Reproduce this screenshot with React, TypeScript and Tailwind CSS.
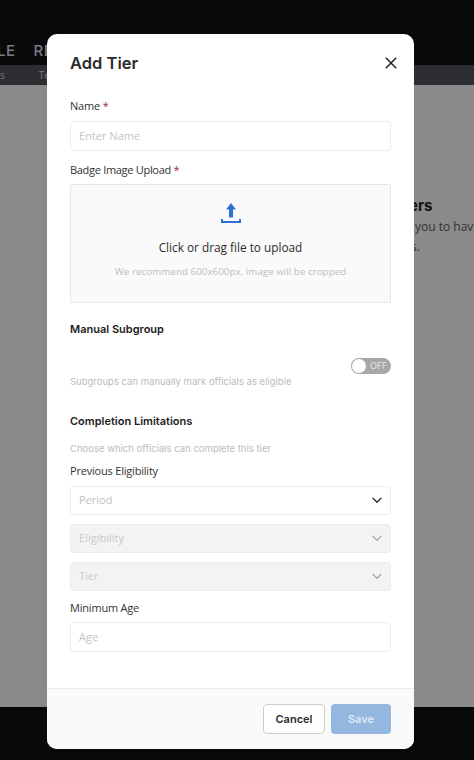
import React from "react";

const open = "font-['Open_Sans',sans-serif]";
const lato = "font-['Inter',sans-serif]";

function Chevron({ color }: { color: string }) {
  return (
    <svg width="10" height="7" viewBox="0 0 10 7" fill="none">
      <path d="M1 1.2 5 5.2l4-4" stroke={color} strokeWidth="1.3" strokeLinecap="round" strokeLinejoin="round" />
    </svg>
  );
}

function Select({ label, disabled, mt }: { label: string; disabled?: boolean; mt: string }) {
  return (
    <div
      className={`${mt} flex h-[29px] items-center justify-between rounded-[4px] border border-[#ebebeb] pl-2 pr-[8px] ${
        disabled ? "bg-[#f3f3f3]" : "bg-white"
      }`}
    >
      <span className={`${open} text-[11px] ${disabled ? "text-[#c9c9c9]" : "text-[#c4c4c4]"}`}>{label}</span>
      <Chevron color={disabled ? "#a9a9a9" : "#2b2b2b"} />
    </div>
  );
}

export default function App() {
  return (
    <div className="relative flex h-[760px] w-[474px] flex-col overflow-hidden bg-[#08090b]">
      <div className="flex h-[65px] items-end overflow-hidden pb-[3px]">
        <span className={`${lato} ml-[-3px] text-[15px] font-medium tracking-[0.5px] text-[#7b7c7e]`}>LE</span>
        <span className={`${lato} ml-[18px] text-[15px] font-medium tracking-[0.5px] text-[#7b7c7e]`}>RE</span>
      </div>
      <div className="flex h-[20px] items-center bg-[#2d2e31]">
        <span className={`${open} ml-[-7px] text-[10px] text-[#77787a]`}>fts</span>
        <span className={`${open} ml-[34px] text-[10px] text-[#77787a]`}>Te</span>
      </div>
      <div className="flex h-[622px] justify-end bg-[#8a8a8a]">
        <div className="w-[60px] pt-[111px]">
          <div className={`${lato} ml-[-5px] text-[15px] leading-[20px] font-bold text-[#111]`}>ers</div>
          <div className={`${open} mt-[1px] ml-[1px] whitespace-nowrap text-[12px] leading-[20px] text-[#333]`}>you to have</div>
          <div className={`${open} ml-[-3px] text-[12px] leading-[20px] text-[#333]`}>s.</div>
        </div>
      </div>
      <div className="flex-1 bg-[#08090b]" />

      <div className="absolute top-[34px] left-[47px] flex h-[715px] w-[367px] flex-col overflow-hidden rounded-[10px] bg-white">
        <div className="flex-1 px-[23px]">
          <div className="flex items-center justify-between pt-[18px]">
            <h1 className={`${lato} text-[16.5px] leading-[22px] font-semibold text-[#2b2b2b]`}>Add Tier</h1>
            <svg className="mr-[-6px]" width="12" height="12" viewBox="0 0 12 12" fill="none">
              <path d="M.8.8l10.4 10.4M11.2.8.8 11.2" stroke="#222" strokeWidth="1.5" />
            </svg>
          </div>

          <div className={`${open} mt-[24px] text-[11px] leading-[16px] font-medium tracking-[-0.2px] text-[#333]`}>
            Name <span className="text-[#a5263c]">*</span>
          </div>
          <div className={`${open} mt-[7px] flex h-[30px] items-center rounded-[4px] border border-[#ebebeb] pl-2 text-[11px] text-[#c4c4c4]`}>
            Enter Name
          </div>

          <div className={`${open} mt-[11px] text-[11px] leading-[16px] font-medium tracking-[-0.3px] text-[#333]`}>
            Badge Image Upload <span className="text-[#a5263c]">*</span>
          </div>
          <div className="mt-[6px] flex h-[119px] flex-col items-center rounded-[2px] border border-dotted border-[#d4d4d4] bg-[#fafafa]">
            <svg className="mt-[17px]" width="20" height="22" viewBox="0 0 20 22" fill="none">
              <path d="M10 1 15 7.5H12V15.5H8V7.5H5Z" fill="#2f72d3" />
              <path d="M1 17V20H19V17" stroke="#2f72d3" strokeWidth="2" fill="none" />
            </svg>
            <div className={`${open} mt-[14px] text-[11.8px] leading-[18px] text-[#2b2b2b]`}>Click or drag file to upload</div>
            <div className={`${open} mt-[8px] text-[9.85px] leading-[14px] text-[#bdbdbd]`}>We recommend 600x600px, image will be cropped</div>
          </div>

          <div className={`${lato} mt-[18px] text-[11px] leading-[16px] font-semibold text-[#1c1c1c]`}>Manual Subgroup</div>
          <div className="mt-[21px] flex justify-end">
            <div className="flex h-[16px] w-[40px] items-center rounded-full bg-[#a8a8a8] pl-[1px]">
              <div className="h-[14px] w-[14px] rounded-full bg-white" />
              <span className={`${open} ml-[4px] text-[9px] text-[#e8e8e8]`}>OFF</span>
            </div>
          </div>
          <div className={`${lato} mt-[1px] text-[9.5px] leading-[14px] text-[#bcbcbc]`}>Subgroups can manually mark officials as eligible</div>

          <div className={`${lato} mt-[24px] text-[11px] leading-[16px] font-semibold text-[#1c1c1c]`}>Completion Limitations</div>
          <div className={`${lato} mt-[13px] text-[9.5px] leading-[14px] text-[#bcbcbc]`}>Choose which officials can complete this tier</div>
          <div className={`${open} mt-[7px] text-[11px] leading-[16px] font-medium tracking-[-0.2px] text-[#333]`}>Previous Eligibility</div>
          <Select label="Period" mt="mt-[7px]" />
          <Select label="Eligibility" disabled mt="mt-[9px]" />
          <Select label="Tier" disabled mt="mt-[9px]" />
          <div className={`${open} mt-[9px] text-[11px] leading-[16px] font-medium tracking-[-0.2px] text-[#333]`}>Minimum Age</div>
          <div className={`${open} mt-[6px] flex h-[30px] items-center rounded-[4px] border border-[#ebebeb] pl-2 text-[11px] text-[#c4c4c4]`}>
            Age
          </div>
        </div>

        <div className="flex h-[61px] items-center justify-end gap-[6px] border-t border-[#e9e9e9] bg-[#fafafa] px-[23px]">
          <button className={`${lato} h-[30px] w-[62px] rounded-[4px] border border-[#d2ccc7] bg-white text-[11px] font-semibold text-[#2b2b2b]`}>
            Cancel
          </button>
          <button className={`${lato} h-[30px] w-[60px] rounded-[4px] bg-[#94b7e0] text-[11px] font-semibold text-[#dfe9f6]`}>
            Save
          </button>
        </div>
      </div>
    </div>
  );
}
